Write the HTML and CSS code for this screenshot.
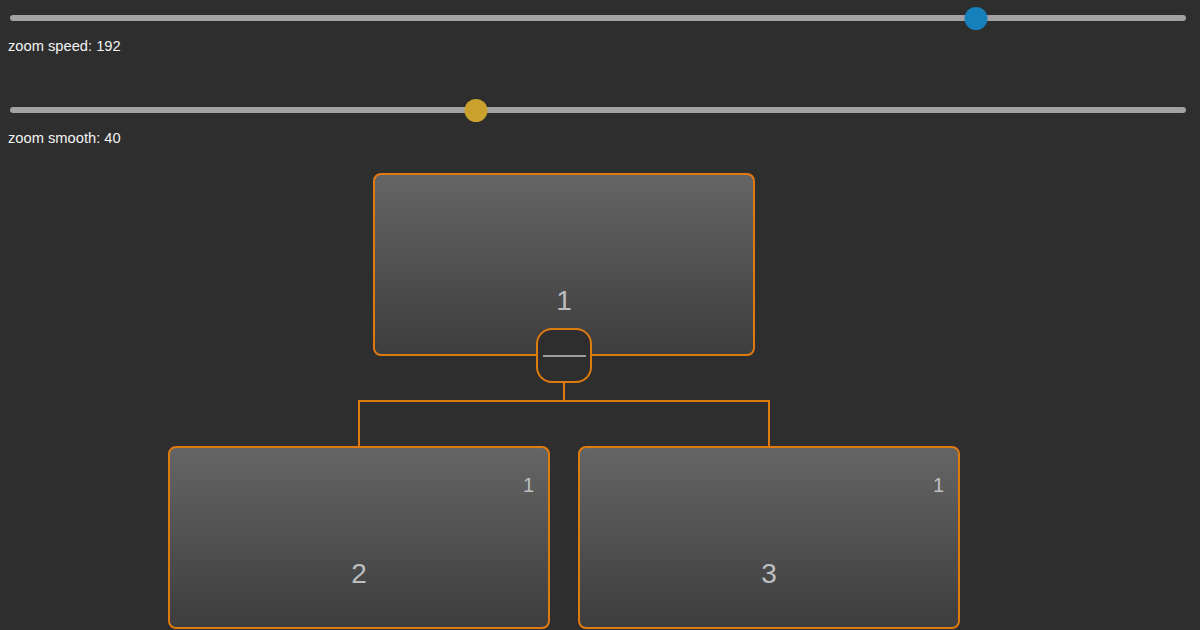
FILE: index.html
```html
<!DOCTYPE html>
<html>
<head>
<meta charset="utf-8">
<link rel="stylesheet" href="styles.css">
</head>
<body>
<div class="panel">
  <div class="control">
    <div class="slider">
      <div class="track"></div>
      <div class="thumb thumb-blue" style="left: 82.14%"></div>
    </div>
    <div class="label">zoom speed: 192</div>
  </div>
  <div class="control">
    <div class="slider">
      <div class="track"></div>
      <div class="thumb thumb-gold" style="left: 39.63%"></div>
    </div>
    <div class="label">zoom smooth: 40</div>
  </div>
</div>

<div class="tree">
  <div class="root">
    <div class="node">
      <div class="name name-root">1</div>
    </div>
    <div class="collapse"><div class="collapse-line"></div></div>
  </div>
  <div class="stem"></div>
  <div class="bar"></div>
  <div class="children">
    <div class="child">
      <div class="drop"></div>
      <div class="node">
        <div class="count">1</div>
        <div class="name">2</div>
      </div>
    </div>
    <div class="child">
      <div class="drop"></div>
      <div class="node">
        <div class="count">1</div>
        <div class="name">3</div>
      </div>
    </div>
  </div>
</div>
</body>
</html>
```

FILE: styles.css
```css
html, body {
  margin: 0;
  padding: 0;
  background: #2e2e2e;
  height: 630px;
  overflow: hidden;
  font-family: "Liberation Sans", Arial, sans-serif;
}

.panel {
  padding: 0 8px;
}

.control + .control {
  margin-top: 37px;
}

.slider {
  position: relative;
  height: 36px;
  margin: 0 6px 0 2px;
  display: flex;
  align-items: center;
}

.track {
  flex: 1;
  height: 6px;
  border-radius: 3px;
  background: #a2a2a2;
}

.thumb {
  position: absolute;
  top: 6.5px;
  width: 23px;
  height: 23px;
  border-radius: 50%;
  transform: translateX(-50%);
}

.thumb-blue {
  background: #1580ba;
}

.thumb-gold {
  background: #c9a12c;
}

.label {
  margin-top: 2px;
  font-size: 14.7px;
  line-height: 17px;
  color: #f2f2f2;
}

.tree {
  margin: 26px 0 0 168px;
  width: 792px;
  display: flex;
  flex-direction: column;
  align-items: center;
}

.root {
  position: relative;
}

.node {
  box-sizing: border-box;
  width: 382px;
  height: 183px;
  border: 2px solid #df7a0f;
  border-radius: 8px;
  background: linear-gradient(to bottom, #656565, #3d3d3d);
  padding: 0 14px;
  display: flex;
  flex-direction: column;
  color: #bdbec0;
}

.count {
  margin-top: 25px;
  font-size: 20px;
  line-height: 24px;
  text-align: right;
}

.name {
  margin-top: 61px;
  font-size: 28px;
  line-height: 32px;
  text-align: center;
}

.name-root {
  margin-top: 110px;
}

.collapse {
  position: absolute;
  left: 50%;
  top: 155px;
  transform: translateX(-50%);
  box-sizing: border-box;
  width: 56px;
  height: 55px;
  border: 2px solid #df7a0f;
  border-radius: 16px;
  background: #2e2e2e;
  display: flex;
  align-items: center;
  justify-content: center;
}

.collapse-line {
  width: 43px;
  height: 2px;
  background: #9d9d9d;
}

.stem {
  width: 2px;
  height: 44px;
  background: #df7a0f;
}

.bar {
  width: 412px;
  height: 2px;
  background: #df7a0f;
}

.children {
  align-self: stretch;
  display: flex;
  gap: 28px;
}

.child {
  display: flex;
  flex-direction: column;
  align-items: center;
}

.drop {
  width: 2px;
  height: 44px;
  background: #df7a0f;
}
```
